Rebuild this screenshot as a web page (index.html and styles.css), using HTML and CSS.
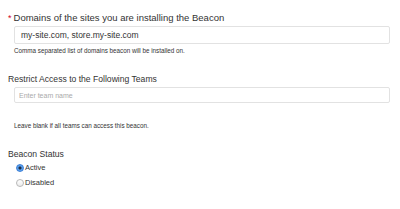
FILE: index.html
```html
<!DOCTYPE html>
<html lang="en">

<head>
  <meta charset="UTF-8">
  <title>Beacon Settings</title>
  <link rel="stylesheet" href="styles.css">
</head>

<body>
  <form class="settings">
    <!-- Domains -->
    <div class="field">
      <label class="field-label field-label-main" for="domains"><span class="required">*</span>Domains of the sites you are installing the Beacon</label>
      <input class="text-input" id="domains" type="text" value="my-site.com, store.my-site.com">
      <p class="help">Comma separated list of domains beacon will be installed on.</p>
    </div>

    <!-- Teams -->
    <div class="field field-teams">
      <label class="field-label" for="teams">Restrict Access to the Following Teams</label>
      <input class="text-input text-input-small" id="teams" type="text" placeholder="Enter team name">
      <p class="help help-spaced">Leave blank if all teams can access this beacon.</p>
    </div>

    <!-- Status -->
    <div class="field field-status">
      <div class="field-label">Beacon Status</div>
      <label class="radio"><input type="radio" name="status" checked>Active</label>
      <label class="radio"><input type="radio" name="status">Disabled</label>
    </div>
  </form>
</body>

</html>
```
FILE: styles.css
```css
body {
  margin: 0;
  padding: 0;
  background-color: #fff;
  font-family: "Liberation Sans", Arial, sans-serif;
  color: #333;
}

.settings {
  padding: 11px 10px 0 8px;
}

.field {
  margin: 0;
}

.field-label {
  display: block;
  font-size: 8.6px;
  line-height: 14px;
  color: #333;
}

.field-label-main {
  font-size: 9.5px;
}

.required {
  color: #d0021b;
  font-size: 9px;
  margin-right: 2px;
  vertical-align: top;
}

.text-input {
  display: block;
  box-sizing: border-box;
  width: 376px;
  height: 18px;
  margin: 1px 0 0 6px;
  padding: 0 6px;
  border: 1px solid #e2e2e2;
  border-radius: 2px;
  font-family: inherit;
  font-size: 8.5px;
  color: #333;
  outline: none;
}

.text-input-small {
  height: 16px;
  padding: 0 4px;
}

.text-input::placeholder {
  color: #aaa;
  font-size: 7px;
}

.help {
  margin: 3px 0 0 6px;
  font-size: 6.3px;
  line-height: 8px;
  color: #333;
}

.help-spaced {
  margin-top: 19px;
}

.field-teams {
  margin-top: 17px;
}

.field-status {
  margin-top: 17px;
}

.radio {
  display: flex;
  align-items: center;
  margin: 3px 0 0 8px;
  font-size: 7.5px;
  line-height: 8px;
}

.radio + .radio {
  margin-top: 7px;
}

.radio input {
  appearance: none;
  -webkit-appearance: none;
  box-sizing: border-box;
  width: 8px;
  height: 8px;
  margin: 0 1px 0 0;
  border: 1px solid #b8b8b8;
  border-radius: 50%;
  background: linear-gradient(#fff, #ececec);
}

.radio input:checked {
  border-color: #3d7fd6;
  background: radial-gradient(circle, #1d2b45 0 1.3px, #5aa0ec 1.8px);
}
```
